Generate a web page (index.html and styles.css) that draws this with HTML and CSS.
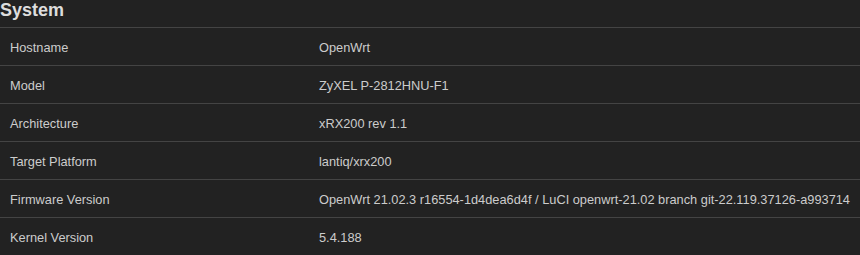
FILE: index.html
```html
<!DOCTYPE html>
<html>
<head>
<meta charset="utf-8">
<link rel="stylesheet" href="styles.css">
</head>
<body>
<div class="section">
  <h3 class="title">System</h3>
  <div class="table">
    <div class="row"><div class="cell">Hostname</div><div class="cell">OpenWrt</div></div>
    <div class="row"><div class="cell">Model</div><div class="cell">ZyXEL P-2812HNU-F1</div></div>
    <div class="row"><div class="cell">Architecture</div><div class="cell">xRX200 rev 1.1</div></div>
    <div class="row"><div class="cell">Target Platform</div><div class="cell">lantiq/xrx200</div></div>
    <div class="row"><div class="cell">Firmware Version</div><div class="cell">OpenWrt 21.02.3 r16554-1d4dea6d4f / LuCI openwrt-21.02 branch git-22.119.37126-a993714</div></div>
    <div class="row"><div class="cell">Kernel Version</div><div class="cell">5.4.188</div></div>
  </div>
</div>
</body>
</html>
```
FILE: styles.css
```css
html, body {
  margin: 0;
  padding: 0;
  background: #222222;
}
body {
  font-family: "Liberation Sans", Arial, sans-serif;
  color: #cccccc;
}
.title {
  margin: 0;
  font-size: 18px;
  line-height: 20px;
  font-weight: bold;
  color: #dddddd;
  padding-bottom: 7px;
  border-bottom: 1px solid #444444;
}
.row {
  display: grid;
  grid-template-columns: 309px 1fr;
  height: 37px;
  align-items: center;
  border-bottom: 1px solid #444444;
  font-size: 12.8px;
}
.row:last-child {
  border-bottom: none;
}
.cell {
  padding-left: 10px;
  padding-top: 1px;
}
```
